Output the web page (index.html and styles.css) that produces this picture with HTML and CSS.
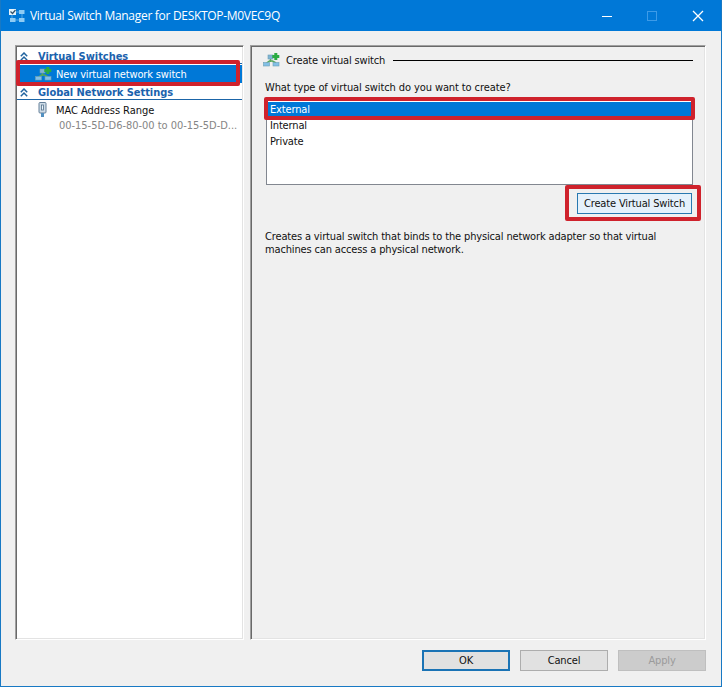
FILE: index.html
```
<!DOCTYPE html>
<html lang="en">
<head>
<meta charset="utf-8">
<title>Virtual Switch Manager</title>
<link rel="stylesheet" href="styles.css">
</head>
<body>
<svg width="0" height="0" class="defs" aria-hidden="true">
  <symbol id="switch" viewBox="0 0 17 14">
    <path d="M7.500 5v4M3.500 10l3-2h3l3.500 2" fill="none" stroke="#56a85a" stroke-width="1.500"/>
    <rect x="5" y="2" width="5" height="4" fill="#7fb3d3" stroke="#6ba0b5" stroke-width=".6"/>
    <rect x="0.500" y="9.500" width="6" height="3.500" fill="#83bfe6" stroke="#6ba0b5" stroke-width=".6"/>
    <rect x="10" y="9.500" width="6" height="3.500" fill="#83bfe6" stroke="#6ba0b5" stroke-width=".6"/>
    <path d="M12.800 0v7M9.300 3.500h7" stroke="#2bab42" stroke-width="3"/>
  </symbol>
  <symbol id="chevrons" viewBox="0 0 8 9">
    <path d="M.8 4.200L4 1l3.200 3.200M.8 8.200L4 5l3.200 3.200" fill="none" stroke="#20639f" stroke-width="1.500"/>
  </symbol>
</svg>
<div class="window">
  <header class="titlebar">
    <svg class="app-icon" viewBox="0 0 16 14">
      <path d="M6 3h5M13 5v6M3 6v5h8" fill="none" stroke="#55a9e8"/>
      <rect x="0" y="0" width="7" height="6" fill="#e6f3fb"/>
      <path d="M1.500 2.500l2 2 3-3.500" fill="none" stroke="#34536b" stroke-width="1.200"/>
      <rect x="10" y="1" width="5.500" height="4" fill="#8ecbf4"/>
      <rect x="1" y="9" width="5.500" height="4" fill="#8ecbf4"/>
      <rect x="10" y="9" width="5.500" height="4" fill="#8ecbf4"/>
    </svg>
    <h1 class="title">Virtual Switch Manager for DESKTOP-M0VEC9Q</h1>
    <svg class="controls" viewBox="0 0 104 12" fill="none">
      <path d="M0 6.500h10" stroke="#fff"/>
      <rect x="45.500" y="1.500" width="9" height="9" stroke="#3d9be8"/>
      <path d="M91 1l10 10M101 1L91 11" stroke="#fff" stroke-width="1.300"/>
    </svg>
  </header>
  <main class="panels">
    <nav class="panel tree">
      <div class="group"><svg class="chev"><use href="#chevrons"/></svg><span>Virtual Switches</span></div>
      <div class="item selected"><svg class="sw"><use href="#switch"/></svg><span>New virtual network switch</span></div>
      <div class="group"><svg class="chev"><use href="#chevrons"/></svg><span>Global Network Settings</span></div>
      <div class="item mac">
        <svg class="nic" viewBox="0 0 9 16"><rect x="1" y=".5" width="7" height="10.500" rx="1" fill="#cfdce6" stroke="#66819a"/><rect x="3.500" y="3" width="2" height="5" fill="#eef6fb" stroke="#53708a" stroke-width=".8"/><path d="M3 11h3v4H3z" fill="#5290c0"/></svg>
        <span>MAC Address Range</span>
      </div>
      <div class="range">00-15-5D-D6-80-00 to 00-15-5D-D...</div>
    </nav>
    <section class="panel detail">
      <div class="section-head"><svg class="sw"><use href="#switch"/></svg><h2>Create virtual switch</h2><i class="rule"></i></div>
      <p class="question">What type of virtual switch do you want to create?</p>
      <ul class="list">
        <li class="on">External</li>
        <li>Internal</li>
        <li>Private</li>
      </ul>
      <div class="action"><button class="create">Create Virtual Switch</button></div>
      <p class="desc">Creates a virtual switch that binds to the physical network adapter so that virtual<br>machines can access a physical network.</p>
    </section>
  </main>
  <footer class="footer">
    <button class="btn ok">OK</button>
    <button class="btn">Cancel</button>
    <button class="btn" disabled>Apply</button>
  </footer>
</div>
</body>
</html>
```
FILE: styles.css
```
*, *::after { box-sizing: border-box; }
body { margin: 0; font: 11px/13px "DejaVu Sans Condensed", "DejaVu Sans", sans-serif; font-stretch: condensed; letter-spacing: -.15px; color: #111; }
h1, h2, p, ul { margin: 0; padding: 0; font-size: inherit; font-weight: normal; }
.defs { position: absolute; }
svg { flex: none; }
.window { width: 722px; height: 687px; background: #f0f0f0; border: 1px solid #1879c4; border-top: 0; display: flex; flex-direction: column; overflow: hidden; }
.titlebar { height: 31px; flex: none; margin: 0 -1px; background: #0078d7; color: #fff; display: flex; align-items: center; padding: 0 15px 0 9px; }
.app-icon { width: 16px; height: 14px; margin-right: 5px; }
.title { font: 12px/16px "Open Sans", sans-serif; letter-spacing: -.3px; white-space: nowrap; flex: 1; }
.controls { width: 104px; height: 12px; margin-right: 1px; }
.panels { height: 595px; margin: 14px 15px 0 14px; display: flex; gap: 6px; }
.panel { border: 1px solid; border-color: #a0a0a0 #fff #fff #a0a0a0; box-shadow: inset 1px 1px #696969, inset -1px -1px #e3e3e3; white-space: nowrap; }
.tree { width: 229px; background: #fff; padding: 2px 1px 0; }
.group { height: 16px; padding-top: 1px; border-bottom: 1px solid #1b65a8; color: #1b62ad; font-weight: bold; letter-spacing: -.05px; display: flex; align-items: center; padding-left: 3px; }
.chev { width: 8px; height: 9px; margin-right: 10px; }
.item { height: 19px; display: flex; align-items: center; }
.selected { position: relative; height: 18px; background: #0078d7; color: #fff; padding-left: 17px; margin: 1px 0 1px 1px; }
.selected::after, .on::after, .action::after { content: ""; position: absolute; border: 4px solid #cf222c; border-radius: 2px; }
.selected::after { left: -2px; top: -5px; width: 224px; height: 26px; }
.sw { width: 17px; height: 14px; margin-right: 4px; }
.mac { padding-left: 21px; height: 20px; letter-spacing: -.05px; }
.nic { width: 9px; height: 16px; margin-right: 9px; }
.range { color: #858585; padding-left: 42px; margin-top: -1px; letter-spacing: -.03px; }
.detail { width: 456px; padding: 7px 12px 0; }
.section-head { height: 14px; display: flex; align-items: center; }
.section-head .sw { margin-right: 6px; }
.rule { height: 1px; background: #000; flex: 1; margin-left: 8px; }
.question { margin: 14px 0 0 2px; letter-spacing: -.1px; }
.list { list-style: none; margin: 6px 0 0 3px; width: 427px; height: 85px; border: 1px solid #828790; background: #fff; padding: 1px; }
.list li { height: 16px; line-height: 16px; padding-left: 2px; position: relative; }
.list .on { background: #0078d7; color: #fff; }
.on::after { left: -4px; top: -5px; width: 431px; height: 23px; }
.action { position: relative; display: flex; justify-content: flex-end; margin-top: 8px; }
.action::after { left: 302px; top: -8px; width: 136px; height: 36px; }
button { font: inherit; letter-spacing: inherit; color: #111; border-radius: 0; padding: 0; white-space: nowrap; }
.create { width: 115px; height: 21px; background: #e5f1fb; border: 1px solid #2878b0; margin-right: 1px; }
.desc { margin: 16px 0 0 2px; }
.footer { display: flex; gap: 10px; justify-content: flex-end; padding: 10px 15px 0 0; }
.btn { width: 88px; height: 21px; background: #e1e1e1; border: 1px solid #adadad; }
.ok { border: 2px solid #1a73b5; }
.btn:disabled { background: #ccc; border-color: #bfbfbf; color: #9b9b9b; }
```
